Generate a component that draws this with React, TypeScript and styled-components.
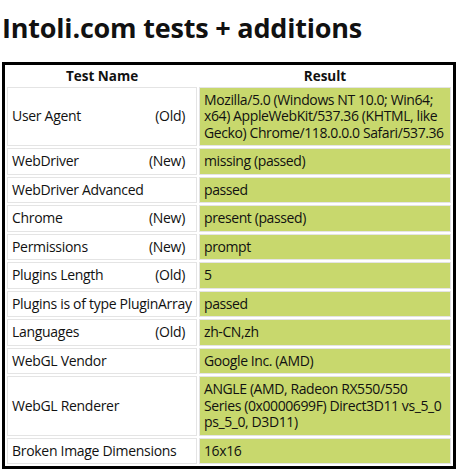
import React from "react";
import styled, { createGlobalStyle } from "styled-components";

const GlobalStyle = createGlobalStyle`
  html, body {
    margin: 0;
    padding: 0;
    background: #ffffff;
  }
  body {
    padding-left: 2px;
    font-family: "Open Sans", "Noto Sans", sans-serif;
    color: #111;
  }
`;

const Title = styled.h1`
  margin: 9px 0 16px 0;
  font-size: 27px;
  line-height: 37px;
  font-weight: 700;
  letter-spacing: -0.2px;
`;

const ResultTable = styled.table`
  width: 454px;
  border: 3px solid #000;
  border-spacing: 2px;
  table-layout: fixed;
  font-size: 14px;
  line-height: 16.5px;
`;

const HeadCell = styled.th`
  padding: 1px 4px 0;
  font-weight: 700;
  font-size: 13.5px;
  text-align: center;
`;

const NameCell = styled.td`
  border: 1px solid #e4e4e4;
  padding: 4px 4px;
  vertical-align: middle;
  letter-spacing: -0.3px;
`;

const ResultCell = styled.td<{ $passed: boolean }>`
  border: 1px solid #e4e4e4;
  padding: 4px 3px 4px 4px;
  vertical-align: middle;
  letter-spacing: -0.4px;
  background: ${(p) => (p.$passed ? "#c8d86d" : "#f45159")};
`;

const NameLine = styled.div`
  display: flex;
  justify-content: space-between;
  white-space: nowrap;
`;

const Tag = styled.span`
  padding-right: 7px;
`;

type Row = { name: string; tag?: "Old" | "New"; result: string };

const rows: Row[] = [
  {
    name: "User Agent",
    tag: "Old",
    result:
      "Mozilla/5.0 (Windows NT 10.0; Win64; x64) AppleWebKit/537.36 (KHTML, like Gecko) Chrome/118.0.0.0 Safari/537.36",
  },
  { name: "WebDriver", tag: "New", result: "missing (passed)" },
  { name: "WebDriver Advanced", result: "passed" },
  { name: "Chrome", tag: "New", result: "present (passed)" },
  { name: "Permissions", tag: "New", result: "prompt" },
  { name: "Plugins Length", tag: "Old", result: "5" },
  { name: "Plugins is of type PluginArray", result: "passed" },
  { name: "Languages", tag: "Old", result: "zh-CN,zh" },
  { name: "WebGL Vendor", result: "Google Inc. (AMD)" },
  {
    name: "WebGL Renderer",
    result:
      "ANGLE (AMD, Radeon RX550/550 Series (0x0000699F) Direct3D11 vs_5_0 ps_5_0, D3D11)",
  },
  { name: "Broken Image Dimensions", result: "16x16" },
];

const App: React.FC = () => {
  return (
    <>
      <GlobalStyle />
      <Title>Intoli.com tests + additions</Title>
      <ResultTable>
        <colgroup>
          <col style={{ width: "190px" }} />
          <col />
        </colgroup>
        <thead>
          <tr>
            <HeadCell>Test Name</HeadCell>
            <HeadCell>Result</HeadCell>
          </tr>
        </thead>
        <tbody>
          {rows.map((row) => (
            <tr key={row.name}>
              <NameCell>
                <NameLine>
                  <span>{row.name}</span>
                  {row.tag && <Tag>({row.tag})</Tag>}
                </NameLine>
              </NameCell>
              <ResultCell $passed>{row.result}</ResultCell>
            </tr>
          ))}
        </tbody>
      </ResultTable>
    </>
  );
};

export default App;
